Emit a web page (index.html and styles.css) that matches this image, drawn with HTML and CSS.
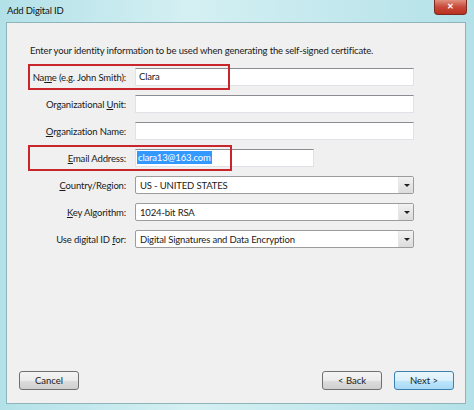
FILE: index.html
```html
<!DOCTYPE html>
<html lang="en">
<head>
    <meta charset="UTF-8">
    <title>Add Digital ID</title>
    <link rel="stylesheet" href="styles.css">
</head>
<body>
    <div class="window">
        <div class="titlebar">
            <span class="title">Add Digital ID</span>
            <div class="close-btn">&#x2715;</div>
        </div>

        <div class="panel">
            <p class="intro">Enter your identity information to be used when generating the self-signed certificate.</p>

            <div class="form">
                <div class="row">
                    <label>Na<u>m</u>e (e.g. John Smith):</label>
                    <div class="field">Clara</div>
                    <div class="mark mark-name"></div>
                </div>
                <div class="row">
                    <label>Organizational <u>U</u>nit:</label>
                    <div class="field"></div>
                </div>
                <div class="row">
                    <label><u>O</u>rganization Name:</label>
                    <div class="field"></div>
                </div>
                <div class="row">
                    <label><u>E</u>mail Address:</label>
                    <div class="field field-short"><span class="selected">clara13@163.com</span></div>
                    <div class="mark mark-email"></div>
                </div>
                <div class="row">
                    <label><u>C</u>ountry/Region:</label>
                    <div class="select"><span>US - UNITED STATES</span><i class="arrow"></i></div>
                </div>
                <div class="row">
                    <label><u>K</u>ey Algorithm:</label>
                    <div class="select"><span>1024-bit RSA</span><i class="arrow"></i></div>
                </div>
                <div class="row">
                    <label>Use digital ID <u>f</u>or:</label>
                    <div class="select"><span>Digital Signatures and Data Encryption</span><i class="arrow"></i></div>
                </div>
            </div>

            <div class="footer">
                <button class="btn">Cancel</button>
                <div class="nav">
                    <button class="btn">&lt; Back</button>
                    <button class="btn btn-default">Next &gt;</button>
                </div>
            </div>
        </div>
    </div>
</body>
</html>
```

FILE: styles.css
```css
:root {
    --frame: #b3e1e8;
    --frame-light: #d4f0f3;
    --panel: #f0f0f0;
    --text: #1a1a1a;
    --mark-red: #c9252c;
    --ui-font: Lato, "Open Sans", sans-serif;
}

* {
    box-sizing: border-box;
    margin: 0;
    padding: 0;
}

body {
    width: 474px;
    height: 410px;
    overflow: hidden;
    font-family: var(--ui-font);
    font-size: 9.5px;
    letter-spacing: -0.15px;
    color: var(--text);
    background: var(--frame);
}

.window {
    height: 410px;
    display: flex;
    flex-direction: column;
    padding: 0 8px 6px 6px;
    background: linear-gradient(90deg, var(--frame) 0%, var(--frame-light) 40%, var(--frame) 100%);
}

.titlebar {
    height: 22px;
    display: flex;
    align-items: flex-start;
    justify-content: space-between;
}

.title {
    font-size: 9.5px;
    padding-top: 5px;
    padding-left: 1px;
    color: #111;
}

.close-btn {
    width: 33px;
    height: 15px;
    margin-right: -1px;
    border: 1px solid #7a2a20;
    border-top: none;
    border-radius: 0 0 4px 4px;
    background: linear-gradient(#e0907e, #c8483a 50%, #b9321f);
    color: #fff;
    font-size: 8px;
    font-weight: bold;
    letter-spacing: 0;
    text-align: center;
    line-height: 13px;
}

.panel {
    flex: 1;
    display: flex;
    flex-direction: column;
    background: var(--panel);
    border: 1px solid #8fb4ba;
    padding: 21px 11px 13px 0;
}

.intro {
    padding-left: 23px;
    line-height: 14px;
    margin-bottom: 10px;
}

.form {
    display: flex;
    flex-direction: column;
    gap: 9px;
}

.row {
    display: flex;
    align-items: center;
    height: 18px;
    position: relative;
}

.row label {
    width: 119px;
    text-align: right;
    margin-right: 9px;
    white-space: nowrap;
}

.field {
    width: 279px;
    height: 18px;
    background: #fff;
    border: 1px solid #dfe2e6;
    border-top-color: #8a8d91;
    padding: 1px 3px;
    line-height: 14px;
}

.field-short {
    width: 179px;
    padding-left: 1px;
}

.selected {
    background: #3399ff;
    color: #fff;
    padding: 1px 1px;
}

.select {
    width: 279px;
    height: 18px;
    display: flex;
    align-items: center;
    justify-content: space-between;
    background: #fff;
    border: 1px solid #9c9c9c;
    border-radius: 2px;
    padding-left: 4px;
}

.select .arrow {
    width: 15px;
    height: 16px;
    background: linear-gradient(#f2f2f2, #dcdcdc);
    border-left: 1px solid #e6e6e6;
    position: relative;
}

.select .arrow::after {
    content: "";
    position: absolute;
    left: 5px;
    top: 7px;
    border-left: 3px solid transparent;
    border-right: 3px solid transparent;
    border-top: 3px solid #222;
}

.mark {
    position: absolute;
    top: -4px;
    left: 21px;
    height: 26px;
    border: 2px solid var(--mark-red);
    pointer-events: none;
}

.mark-name {
    width: 202px;
}

.mark-email {
    width: 204px;
}

.footer {
    margin-top: auto;
    display: flex;
    justify-content: space-between;
    padding-left: 12px;
}

.nav {
    display: flex;
    gap: 12px;
}

.btn {
    width: 60px;
    height: 19px;
    font-family: var(--ui-font);
    font-size: 9.5px;
    color: var(--text);
    border: 1px solid #707070;
    border-radius: 3px;
    background: linear-gradient(#f4f4f4 0%, #ebebeb 50%, #dddddd 51%, #cfcfcf 100%);
}

.btn-default {
    border-color: #3c7fb1;
    background: linear-gradient(#eaf6fd 0%, #d9f0fc 50%, #bee6fd 51%, #a7d9f5 100%);
}
```
